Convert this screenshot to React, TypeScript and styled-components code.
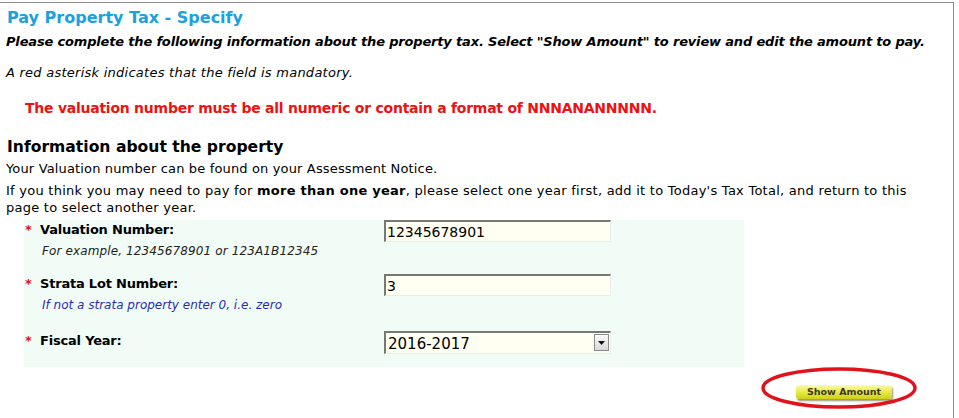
import React from "react";
import styled, { createGlobalStyle } from "styled-components";

const Global = createGlobalStyle`
  html, body { margin: 0; padding: 0; background: #fff; }
  body { font-family: Verdana, "DejaVu Sans", sans-serif; color: #000; }
`;

const Frame = styled.div`
  margin-top: 2px;
  width: 954px;
  height: 420px;
  border-top: 1px solid #8c8c8c;
  border-right: 1px solid #8c8c8c;
  box-sizing: border-box;
  padding-left: 6px;
`;

const Title = styled.h1`
  margin: 5px 0 0 1px;
  font-size: 16px;
  line-height: 20px;
  font-weight: bold;
  color: #1ba1de;
`;

const Lead = styled.p`
  margin: 6px 0 0;
  font-size: 13px;
  line-height: 16px;
  font-weight: bold;
  font-style: italic;
  letter-spacing: -0.17px;
`;

const Note = styled.p`
  margin: 15px 0 0;
  font-size: 13px;
  line-height: 16px;
  font-style: italic;
  letter-spacing: 0.25px;
`;

const ErrorMsg = styled.p`
  margin: 18px 0 0 19px;
  font-size: 14px;
  line-height: 18px;
  font-weight: bold;
  color: #ee1111;
  letter-spacing: -0.25px;
`;

const Heading = styled.h2`
  margin: 20px 0 0 1px;
  font-size: 15.6px;
  line-height: 20px;
  font-weight: bold;
`;

const Para = styled.p<{ $mt: number; $lh: number; $ls: number }>`
  margin: ${(p) => p.$mt}px 0 0;
  font-size: 13px;
  line-height: ${(p) => p.$lh}px;
  letter-spacing: ${(p) => p.$ls}px;
  width: 915px;
`;

const Panel = styled.div`
  margin: 4px 0 0 18px;
  width: 720px;
  height: 147px;
  background: #f2fcf7;
  display: flex;
  flex-direction: column;
`;

const Row = styled.div<{ $h: number }>`
  display: grid;
  grid-template-columns: 360px 227px;
  height: ${(p) => p.$h}px;
`;

const LabelCol = styled.div`
  display: flex;
  flex-direction: column;
  padding-top: 2px;
`;

const Label = styled.div`
  display: flex;
  font-size: 13px;
  line-height: 16px;
  font-weight: bold;
  letter-spacing: -0.2px;
`;

const Star = styled.span`
  color: #e01010;
  width: 16px;
  padding-left: 1px;
  box-sizing: border-box;
`;

const Hint = styled.div<{ $blue?: boolean }>`
  margin: 5px 0 0 18px;
  font-size: 12px;
  line-height: 16px;
  font-style: italic;
  letter-spacing: ${(p) => (p.$blue ? "0" : "0.12px")};
  color: ${(p) => (p.$blue ? "#2a2ab8" : "#222")};
`;

const TextField = styled.input`
  box-sizing: border-box;
  width: 227px;
  height: 22px;
  margin: 0;
  padding: 1px 0 0 1px;
  border-style: solid;
  border-width: 2px 1px 1px 2px;
  border-color: #777 #ececec #ececec #777;
  background: #fffff2;
  font-family: Tahoma, "DejaVu Sans", sans-serif;
  font-size: 14px;
  color: #000;
  outline: none;
`;

const SelectWrap = styled.div`
  position: relative;
  width: 227px;
  height: 23px;
`;

const Select = styled.select`
  box-sizing: border-box;
  width: 227px;
  height: 23px;
  margin: 0;
  padding: 1px 2px 0;
  appearance: none;
  border-style: solid;
  border-width: 2px 1px 1px 2px;
  border-color: #777 #ececec #ececec #777;
  border-radius: 0;
  background: #fffff2;
  font-family: Tahoma, "DejaVu Sans", sans-serif;
  font-size: 15px;
  color: #000;
  outline: none;
`;

const Arrow = styled.div`
  position: absolute;
  right: 2px;
  top: 3px;
  width: 15px;
  height: 17px;
  box-sizing: border-box;
  border: 1px solid #8a8a8a;
  background: linear-gradient(#fbfbfb, #d8d8d8);
  display: flex;
  align-items: center;
  justify-content: center;
  pointer-events: none;
`;

const Footer = styled.div`
  display: flex;
  justify-content: flex-end;
  width: 926px;
  margin-top: 13px;
`;

const ButtonWrap = styled.div`
  position: relative;
  width: 96px;
  height: 14px;
  margin-right: 40px;
`;

const ShowButton = styled.button`
  width: 96px;
  height: 14px;
  padding: 0;
  border: none;
  border-radius: 3px;
  background: linear-gradient(#fbfbb4 0%, #eeee55 40%, #cfd012 100%);
  box-shadow: 1px 2px 2px rgba(60, 60, 20, 0.55);
  font-family: "DejaVu Sans", sans-serif;
  font-size: 9.5px;
  font-weight: bold;
  color: #3a3a22;
  line-height: 14px;
  cursor: pointer;
`;

const Ring = styled.svg`
  position: absolute;
  left: -36px;
  top: -14px;
  pointer-events: none;
`;

export default function App() {
  return (
    <>
      <Global />
      <Frame>
        <Title>Pay Property Tax - Specify</Title>
        <Lead>
          Please complete the following information about the property tax. Select "Show Amount" to review and edit the amount to pay.
        </Lead>
        <Note>A red asterisk indicates that the field is mandatory.</Note>
        <ErrorMsg>The valuation number must be all numeric or contain a format of NNNANANNNNN.</ErrorMsg>
        <Heading>Information about the property</Heading>
        <Para $mt={4} $lh={16} $ls={0.15}>Your Valuation number can be found on your Assessment Notice.</Para>
        <Para $mt={5} $lh={17} $ls={0.25}>
          If you think you may need to pay for <b>more than one year</b>, please select one year first, add it to Today's Tax Total, and return to this page to select another year.
        </Para>
        <Panel>
          <Row $h={54}>
            <LabelCol>
              <Label><Star>*</Star>Valuation Number:</Label>
              <Hint>For example, 12345678901 or 123A1B12345</Hint>
            </LabelCol>
            <TextField defaultValue="12345678901" />
          </Row>
          <Row $h={57}>
            <LabelCol>
              <Label><Star>*</Star>Strata Lot Number:</Label>
              <Hint $blue>If not a strata property enter 0, i.e. zero</Hint>
            </LabelCol>
            <TextField defaultValue="3" />
          </Row>
          <Row $h={36}>
            <LabelCol>
              <Label><Star>*</Star>Fiscal Year:</Label>
            </LabelCol>
            <SelectWrap>
              <Select defaultValue="2016-2017">
                <option>2016-2017</option>
                <option>2015-2016</option>
              </Select>
              <Arrow>
                <svg width="7" height="4" viewBox="0 0 7 4">
                  <path d="M0 0H7L3.5 4Z" fill="#111" />
                </svg>
              </Arrow>
            </SelectWrap>
          </Row>
        </Panel>
        <Footer>
          <ButtonWrap>
            <ShowButton>Show Amount</ShowButton>
            <Ring width="160" height="44" viewBox="0 0 160 44">
              <ellipse cx="79" cy="22" rx="76" ry="19" fill="none" stroke="#e2121c" strokeWidth="3.5" />
            </Ring>
          </ButtonWrap>
        </Footer>
      </Frame>
    </>
  );
}
